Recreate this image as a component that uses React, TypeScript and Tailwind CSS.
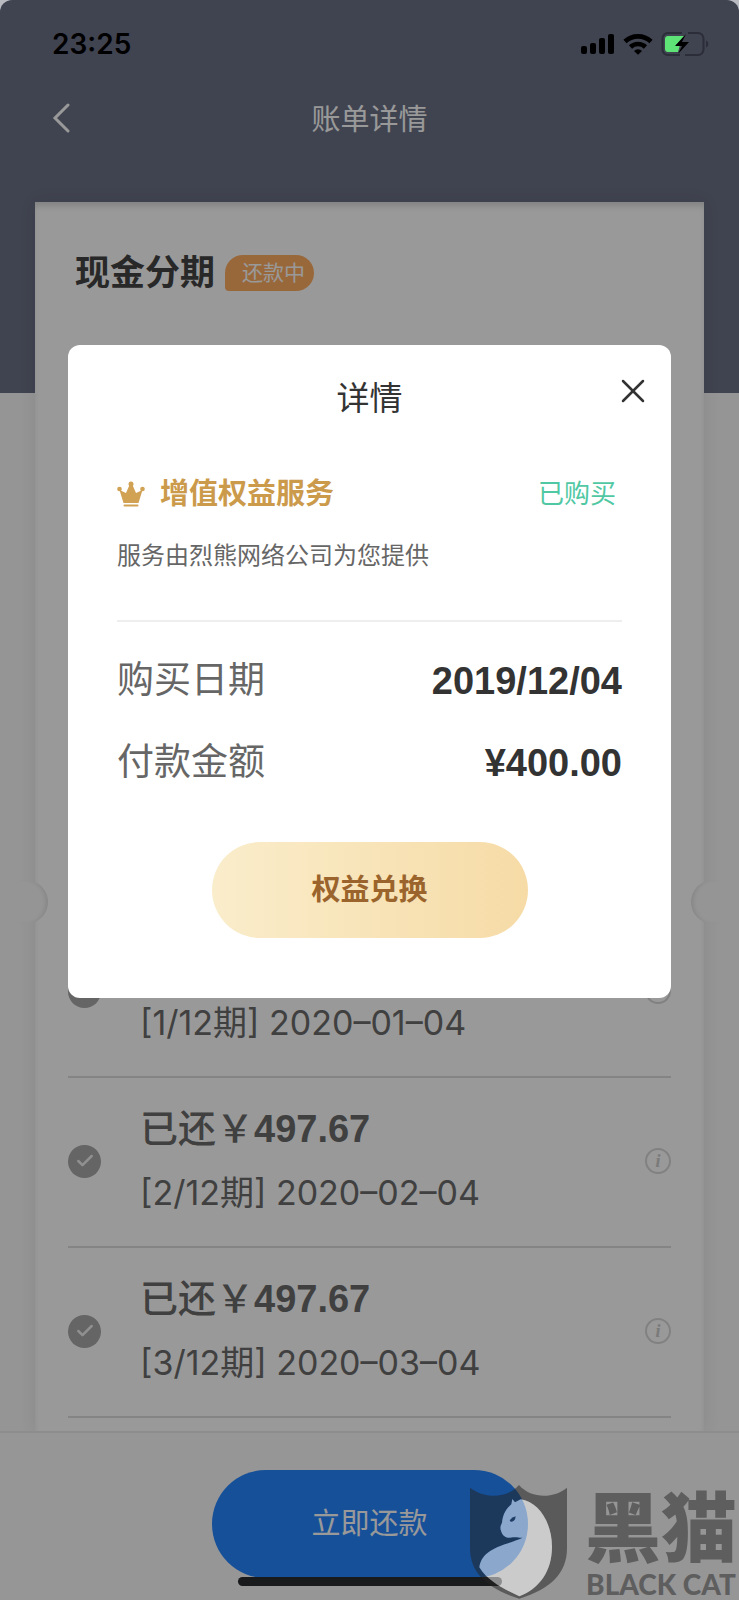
import { Check, X } from "lucide-react"

const installments = [
  { term: 1, amount: "497.67", date: "2020–01–04" },
  { term: 2, amount: "497.67", date: "2020–02–04" },
  { term: 3, amount: "497.67", date: "2020–03–04" },
]

function StatusBar() {
  return (
    <div className="relative z-20 flex h-[88px] items-center justify-between pl-[52px] pr-[30px]">
      <span className="font-['Inter',sans-serif] text-[28px] font-semibold leading-8 text-black">23:25</span>
      <div className="flex items-center gap-2">
        {/* Signal */}
        <svg width="34" height="22" viewBox="0 0 34 22" fill="#000">
          <rect x="0" y="13" width="6" height="8" rx="2" />
          <rect x="9" y="10" width="6" height="11" rx="2" />
          <rect x="18" y="5" width="6" height="16" rx="2" />
          <rect x="27" y="1" width="6" height="20" rx="2" />
        </svg>
        {/* Wifi */}
        <svg width="30" height="22" viewBox="0 0 30 22" fill="none" stroke="#000" strokeWidth="4.6">
          <path d="M2 8.500a19 19 0 0 1 26 0" />
          <path d="M7.500 14a11 11 0 0 1 15 0" />
          <path d="M15 21.800l-4-3.900a6 6 0 0 1 8 0z" fill="#000" stroke="none" />
        </svg>
        {/* Battery */}
        <svg width="48" height="24" viewBox="0 0 48 24">
          <path
            d="M21 1H7a5.500 5.500 0 0 0-5.500 5.500v11A5.500 5.500 0 0 0 7 23h12M27 1h10a5.500 5.500 0 0 1 5.500 5.500v11A5.500 5.500 0 0 1 37 23H24"
            fill="none"
            stroke="#2b2d38"
            strokeWidth="2"
          />
          <path d="M45 8.500c3 1.500 3 5.500 0 7z" fill="#2b2d38" />
          <path d="M7 4h16l-8 9h4l-2 7H7a3 3 0 0 1-3-3V7a3 3 0 0 1 3-3z" fill="#5ee377" />
          <path d="M25 2 14 14h7l-4 8 11-12h-7z" fill="#000" />
        </svg>
      </div>
    </div>
  )
}

function InstallmentRow({ term, amount, date }: { term: number; amount: string; date: string }) {
  return (
    <li className="flex items-center border-b-2 border-[#dcdcdc] pb-[21px] pt-[19px]">
      <span className="flex size-[33px] items-center justify-center rounded-full bg-[#a8a8a8]">
        <Check className="text-[#f0f0f0]" size={20} strokeWidth={3} />
      </span>
      <div className="ml-[39px] flex-1 text-[#6b6b6b]">
        <p className="text-[38px] font-medium leading-[64px]">
          已还￥<span className="font-bold">{amount}</span>
        </p>
        <p className="font-['Inter','Noto_Sans_CJK_SC',sans-serif] text-[34px] leading-[64px]">
          [{term}/12期] {date}
        </p>
      </div>
      <button
        type="button"
        aria-label="详情"
        className="flex size-[26px] items-center justify-center rounded-full border-2 border-[#d8d8d8] font-['Liberation_Serif',serif] text-[18px] font-bold italic leading-5 text-[#ccc]"
      >
        i
      </button>
    </li>
  )
}

function DetailDialog() {
  return (
    <div role="dialog" aria-label="详情" className="rounded-[12px] bg-white pb-[60px] text-[#333]">
      <div className="grid grid-cols-[40px_1fr_40px] items-start px-[18px] pt-[26px]">
        <h2 className="col-start-2 text-center text-[33px] leading-[56px]">详情</h2>
        <button type="button" aria-label="关闭" className="flex size-10 items-center justify-center">
          <X size={40} strokeWidth={1.5} />
        </button>
      </div>

      <div className="px-[49px]">
        <div className="mt-[47px] flex items-center pr-[6px]">
          <svg width="28" height="26" viewBox="0 0 28 26" fill="#d1a154">
            <path d="M2.500 9 9 12l3.500-8h3L19 12l6.500-3-4 13h-15z" />
            <circle cx="14" cy="3" r="2.500" />
            <circle cx="2.500" cy="8" r="2.300" />
            <circle cx="25.500" cy="8" r="2.300" />
            <rect x="6.500" y="23.500" width="15" height="2" rx="1" />
          </svg>
          <h3 className="ml-[15px] flex-1 text-[29px] font-bold leading-10 text-[#cb9a4b]">增值权益服务</h3>
          <span className="text-[26px] leading-10 text-[#50c8a3]">已购买</span>
        </div>
        <p className="mt-[26px] text-[24px] leading-8 text-[#666]">服务由烈熊网络公司为您提供</p>

        <dl className="mt-[48px] grid grid-cols-[auto_1fr] gap-y-[28px] border-t-2 border-[#eee] pt-[32px] text-[37px] leading-[54px]">
          <dt className="text-[#666]">购买日期</dt>
          <dd className="text-right text-[38px] font-bold">2019/12/04</dd>
          <dt className="text-[#666]">付款金额</dt>
          <dd className="text-right text-[38px] font-bold">¥400.00</dd>
        </dl>

        <div className="mt-[52px] flex justify-center">
          <button
            type="button"
            className="h-24 w-[316px] rounded-full bg-gradient-to-r from-[#faedcb] to-[#f6dba6] text-[29px] font-bold leading-10 text-[#9a642c]"
          >
            权益兑换
          </button>
        </div>
      </div>
    </div>
  )
}

function Watermark() {
  return (
    <div className="pointer-events-none absolute bottom-0 right-[2px] z-30 flex items-end gap-[17px] text-[#5f5e5f]">
      <svg width="98" height="115" viewBox="0 0 294 345">
        <path
          fillRule="evenodd"
          fill="#222"
          fillOpacity="0.52"
          d="M0 8C38 38 108 45 147 0C186 45 256 38 291 8V190C291 265 242 312 148 341C54 312 0 265 0 190ZM127 42L124 58C104 75 98 94 96 113C90 125 90 131 94 140C99 156 112 160 129 157C142 155 150 160 158 158C111 180 36 187 28 247C55 291 103 312 148 334C209 310 246 258 246 185C246 110 203 49 152 43L135 52Z"
        />
        <path
          fill="#fff"
          fillOpacity="0.5"
          d="M127 42L124 58C104 75 98 94 96 113C90 125 90 131 94 140C99 156 112 160 129 157C142 155 150 160 158 158C111 180 36 187 28 247C55 291 103 312 148 334C209 310 246 258 246 185C246 110 203 49 152 43L135 52Z"
        />
        <path d="M119 106q8-10 18-12q-2 18-15 16z" fill="#1f3c66" />
      </svg>
      <div className="flex flex-col items-center">
        <span className="text-[76px] font-black leading-[76px]">黑猫</span>
        <span className="font-['Lato',sans-serif] text-[28px] font-black leading-8">BLACK CAT</span>
      </div>
    </div>
  )
}

export default function App() {
  return (
    <div className="bg-[#b9bbc1] font-['Liberation_Sans','Noto_Sans_CJK_SC',sans-serif]">
      <div className="relative overflow-hidden rounded-t-[12px] bg-[#f8f8f8]">
        <header className="bg-[#6b7185] pb-[245px]">
          <StatusBar />
          <div className="grid h-[60px] grid-cols-[80px_1fr_80px] items-center">
            <button type="button" aria-label="返回" className="pl-[52px]">
              <svg width="20" height="30" viewBox="0 0 20 30" fill="none" stroke="#fff" strokeWidth="3" strokeLinecap="round">
                <path d="M16 2 3 15l13 13" />
              </svg>
            </button>
            <h1 className="pt-1 text-center text-[29px] leading-10 text-white">账单详情</h1>
          </div>
        </header>

        <main className="mx-[35px] -mt-[191px] bg-white pb-[13px] shadow-[0_0_16px_rgba(0,0,0,0.08),inset_0_6px_6px_-2px_rgba(0,0,0,0.15)]">
          <section className="relative h-[700px] px-[40px] pt-[47px]">
            <div className="flex items-center gap-[10px]">
              <h2 className="text-[35px] font-bold leading-[48px] text-[#444]">现金分期</h2>
              <span className="rounded-[18px] rounded-bl-[4px] bg-[#ffad62] pl-[17px] pr-[9px] text-[21px] leading-9 text-white">
                还款中
              </span>
            </div>
            {/* Ticket notches */}
            <span className="absolute -bottom-[22px] -left-[31px] size-[44px] rounded-full bg-[#f8f8f8] shadow-[inset_-4px_0_4px_-2px_rgba(0,0,0,0.1)]" />
            <span className="absolute -bottom-[22px] -right-[31px] size-[44px] rounded-full bg-[#f8f8f8] shadow-[inset_4px_0_4px_-2px_rgba(0,0,0,0.1)]" />
          </section>
          <ul className="mx-[33px] pt-[6px]">
            {installments.map((item) => (
              <InstallmentRow key={item.term} {...item} />
            ))}
          </ul>
        </main>

        <footer className="relative flex justify-center border-t-2 border-[#ececec] bg-[#fbfbfb] pb-[22px] pt-[37px]">
          <button type="button" className="h-[108px] w-[316px] rounded-full bg-[#2585ff] text-[29px] leading-10 text-white">
            立即还款
          </button>
        </footer>

        <div className="absolute inset-0 z-10 bg-black/40 px-[68px] pt-[345px]">
          <DetailDialog />
        </div>

        {/* Home indicator */}
        <div className="absolute inset-x-0 bottom-[14px] z-20 flex justify-center">
          <span className="h-[9px] w-[264px] rounded-full bg-[#191a1c]" />
        </div>
        <Watermark />
      </div>
    </div>
  )
}
